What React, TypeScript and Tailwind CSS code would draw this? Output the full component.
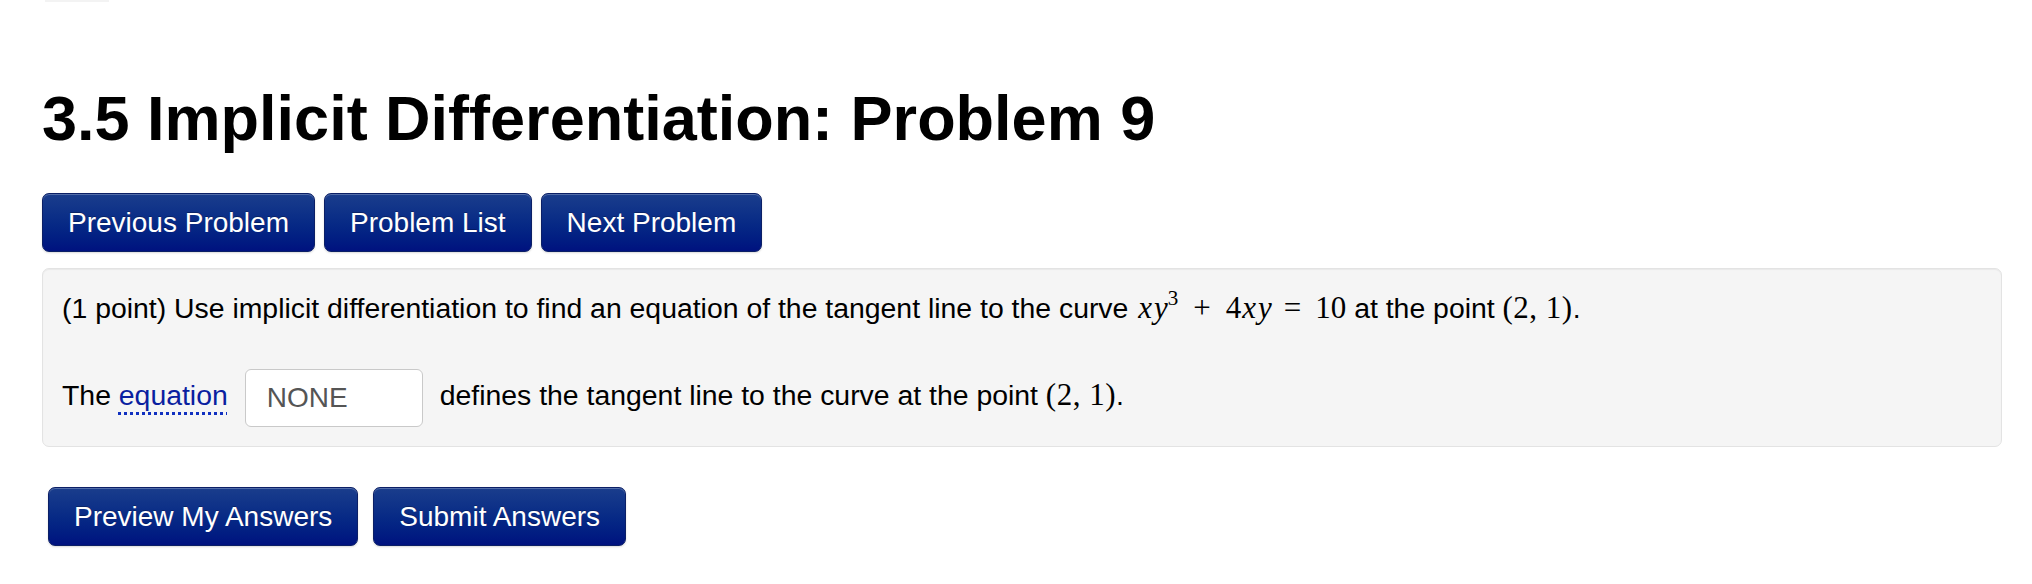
import React from 'react'

const sans = { fontFamily: '"Liberation Sans", Arial, Helvetica, sans-serif' }
const serif = { fontFamily: '"Liberation Serif", "Times New Roman", serif' }

function NavButton({ label }: { label: string }) {
  return (
    <button
      className="h-[59px] px-[25px] rounded-[7px] border border-[#0b1f66] bg-gradient-to-b from-[#1a3d8c] to-[#00117f] text-white text-[28px] leading-none shadow-[inset_0_1px_0_rgba(255,255,255,0.25),0_1px_2px_rgba(0,0,0,0.15)] [text-shadow:0_-1px_0_rgba(0,0,0,0.25)]"
      style={sans}
    >
      {label}
    </button>
  )
}

export default function App() {
  return (
    <div className="min-h-[584px] bg-white text-black" style={sans}>
      {/* leftover shadow from the header cut off at the top */}
      <div className="ml-[45px] w-[64px] h-[2px] bg-[#f3f3f3]" />

      <div className="pl-[42px] pr-[30px]">
        <h1 className="mt-[81px] text-[63px] font-bold leading-[70px]">
          3.5 Implicit Differentiation: Problem 9
        </h1>

        <div className="mt-[40px] flex gap-[9px]">
          <NavButton label="Previous Problem" />
          <NavButton label="Problem List" />
          <NavButton label="Next Problem" />
        </div>

        <div className="mt-[16px] w-[1960px] rounded-[7px] border border-[#e3e3e3] bg-[#f5f5f5] pt-[19px] pb-[19px] px-[19px] shadow-[inset_0_1px_1px_rgba(0,0,0,0.05)] text-[28.4px]">
          <p className="h-[40px] leading-[40px] whitespace-nowrap">
            (1 point) Use implicit differentiation to find an equation of the tangent line to the curve{' '}
            <span className="text-[31px] ml-[2px]" style={serif}>
              <span className="italic tracking-[2px]">xy</span>
              <span className="relative -top-[13px] text-[21px] -ml-[2px]">3</span>
              <span className="ml-[15px] mr-[15px]">+</span>4
              <span className="italic tracking-[2px] ml-[1px]">xy</span>
              <span className="ml-[10px] mr-[14px]">=</span>10
            </span>{' '}
            at the point <span className="text-[31px] tracking-[0.5px]" style={serif}>(2, 1)</span>.
          </p>

          <div className="mt-[41px] flex items-center h-[58px] whitespace-nowrap">
            <span className="-mt-[5px]">The&nbsp;</span>
            <span className="-mt-[5px] text-[#0a1fa0] underline decoration-dotted decoration-[3px] underline-offset-[7px] decoration-[#1030c0]">
              equation
            </span>
            <div className="ml-[17px] mr-[17px] h-[58px] w-[178px] rounded-[6px] border border-[#c9c9c9] bg-white pl-[21px] flex items-center text-[28px] text-[#555]">
              NONE
            </div>
            <span className="-mt-[5px]">
              defines the tangent line to the curve at the point{' '}
              <span className="text-[31px] tracking-[0.5px]" style={serif}>(2, 1)</span>.
            </span>
          </div>
        </div>

        <div className="mt-[40px] ml-[6px] flex gap-[15px]">
          <NavButton label="Preview My Answers" />
          <NavButton label="Submit Answers" />
        </div>
      </div>
    </div>
  )
}
